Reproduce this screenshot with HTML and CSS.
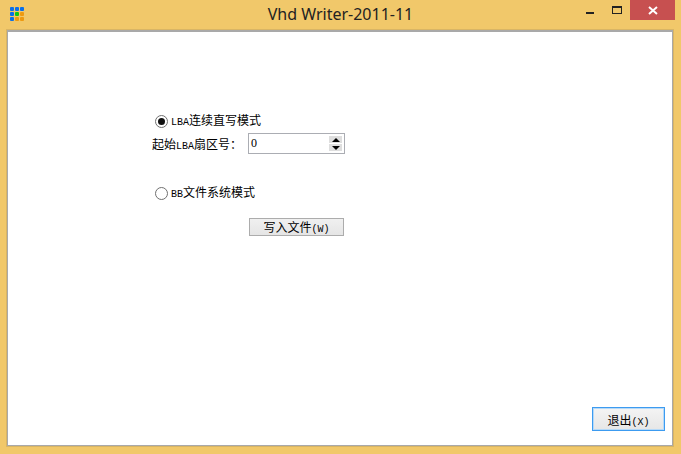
FILE: index.html
```html
<!DOCTYPE html>
<html lang="zh-CN">
<head>
  <meta charset="UTF-8" />
  <title>Vhd Writer-2011-11</title>
  <link rel="stylesheet" href="styles.css">
</head>
<body>

<div class="window">
  <!-- title bar -->
  <div class="titlebar">
    <svg class="app-icon" width="15" height="15" viewBox="0 0 15 15">
      <rect x="0" y="0" width="4" height="4" rx="1" fill="#0a6fe8"/>
      <rect x="5" y="0" width="4" height="4" rx="1" fill="#0a6fe8"/>
      <rect x="10" y="0" width="4" height="4" rx="1" fill="#0a6fe8"/>
      <rect x="0" y="5" width="4" height="4" rx="1" fill="#0a6fe8"/>
      <rect x="5" y="5" width="4" height="4" rx="1" fill="#10c810"/>
      <rect x="10" y="5" width="4" height="4" rx="1" fill="#ee9a10"/>
      <rect x="0" y="10" width="4" height="4" rx="1" fill="#0a6fe8"/>
      <rect x="5" y="10" width="4" height="4" rx="1" fill="#ee9a10"/>
      <rect x="10" y="10" width="4" height="4" rx="1" fill="#ee9a10"/>
    </svg>
    <div class="title">Vhd Writer-2011-11</div>
    <div class="controls">
      <div class="ctl"><span class="min-glyph"></span></div>
      <div class="ctl"><span class="max-glyph"></span></div>
      <div class="ctl close">
        <svg width="10" height="9" viewBox="0 0 10 9"><path d="M1 1 L9 8 M9 1 L1 8" stroke="#fff" stroke-width="2"/></svg>
      </div>
    </div>
  </div>

  <!-- client area -->
  <div class="client">
    <div class="form">
      <label class="radio-row">
        <span class="radio checked"></span>
        <span><span class="lat">LBA</span>连续直写模式</span>
      </label>
      <div class="lba-row">
        <span class="lba-label">起始<span class="lat">LBA</span>扇区号：</span>
        <div class="spinner">
          <span class="spin-value">0</span>
          <div class="spin-btns">
            <span class="spin-btn"><span class="arrow-up"></span></span>
            <span class="spin-btn"><span class="arrow-down"></span></span>
          </div>
        </div>
      </div>
      <label class="radio-row second">
        <span class="radio"></span>
        <span><span class="lat">BB</span>文件系统模式</span>
      </label>
      <button class="btn write-btn">写入文件<span class="lat">(W)</span></button>
    </div>
    <div class="footer">
      <button class="btn exit-btn">退出<span class="lat">(X)</span></button>
    </div>
  </div>
</div>

</body>
</html>
```
FILE: styles.css
```css
html, body {
  margin: 0;
  height: 100%;
  overflow: hidden;
}
body {
  background: #f1c86a;
  color: #000;
  font-family: "Noto Sans CJK SC", "Liberation Sans", sans-serif;
  font-size: 12px;
}
.window {
  width: 681px;
  height: 454px;
  display: flex;
  flex-direction: column;
  box-sizing: border-box;
}
.titlebar {
  height: 30px;
  flex: none;
  display: flex;
  align-items: flex-start;
  position: relative;
}
.app-icon {
  margin: 7px 0 0 10px;
}
.title {
  position: absolute;
  left: 0;
  right: 0;
  top: 4px;
  text-align: center;
  font-family: "Noto Sans", sans-serif;
  font-size: 16px;
  line-height: 20px;
  color: #222;
}
.controls {
  margin-left: auto;
  margin-right: 6px;
  display: flex;
  position: relative;
}
.ctl {
  width: 27px;
  height: 20px;
  display: flex;
  justify-content: center;
}
.ctl:first-child {
  width: 26px;
}
.close {
  width: 45px;
  background: #c75050;
  align-items: center;
}
.min-glyph {
  width: 8px;
  height: 2px;
  margin-top: 12px;
  background: #222;
}
.max-glyph {
  width: 8px;
  height: 5px;
  margin-top: 6px;
  border: 1px solid #222;
  border-top-width: 2px;
}
.client {
  flex: 1;
  margin: 0 8px 8px 7px;
  border: 1px solid #a9a9a9;
  border-top-width: 2px;
  outline: 1px solid #d9b564;
  background: #fff;
  box-shadow: inset 0 0 0 1px #fff;
  display: flex;
  flex-direction: column;
  justify-content: space-between;
}
.form {
  padding: 82px 0 0 144px;
  width: 200px;
}
.lat {
  font-family: "Liberation Mono", monospace;
  font-size: 10px;
}
.radio-row {
  display: flex;
  align-items: center;
  gap: 3px;
  height: 14px;
  padding-left: 3px;
  line-height: 14px;
}
.radio-row.second {
  margin-top: 32px;
}
.radio {
  width: 11px;
  height: 11px;
  border: 1px solid #707070;
  border-radius: 50%;
  background: #fff;
  position: relative;
}
.radio.checked::after {
  content: "";
  position: absolute;
  left: 2px;
  top: 2px;
  width: 7px;
  height: 7px;
  border-radius: 50%;
  background: #111;
}
.lba-row {
  display: flex;
  align-items: center;
  margin-top: 5px;
  height: 21px;
}
.lba-label {
  width: 96px;
  flex: none;
}
.spinner {
  width: 95px;
  height: 19px;
  flex: none;
  border: 1px solid #abadb3;
  display: flex;
  align-items: center;
  justify-content: space-between;
  background: #fff;
}
.spin-value {
  padding-left: 2px;
  font-family: "Liberation Serif", serif;
  font-size: 12px;
}
.spin-btns {
  display: flex;
  flex-direction: column;
  margin-right: 2px;
  gap: 1px;
}
.spin-btn {
  width: 13px;
  height: 7px;
  background: #dedede;
  display: flex;
  align-items: center;
  justify-content: center;
}
.arrow-up, .arrow-down {
  width: 0;
  height: 0;
  border-left: 4px solid transparent;
  border-right: 4px solid transparent;
}
.arrow-up {
  border-bottom: 4px solid #000;
}
.arrow-down {
  border-top: 4px solid #000;
}
.btn {
  font-family: inherit;
  font-size: 12px;
  color: #000;
  padding: 0;
  background: linear-gradient(#f0f0f0, #e5e5e5);
  border: 1px solid #acacac;
}
.write-btn {
  display: block;
  width: 95px;
  height: 18px;
  line-height: 15px;
  margin: 18px 0 0 97px;
}
.footer {
  display: flex;
  justify-content: flex-end;
  padding: 0 7px 14px 0;
}
.exit-btn {
  width: 73px;
  height: 24px;
  border: 1px solid #3c9bf0;
  background: linear-gradient(#f4f4f4, #e6e6e6);
  box-shadow: inset 0 0 0 1px #b5d9f8;
}
```
